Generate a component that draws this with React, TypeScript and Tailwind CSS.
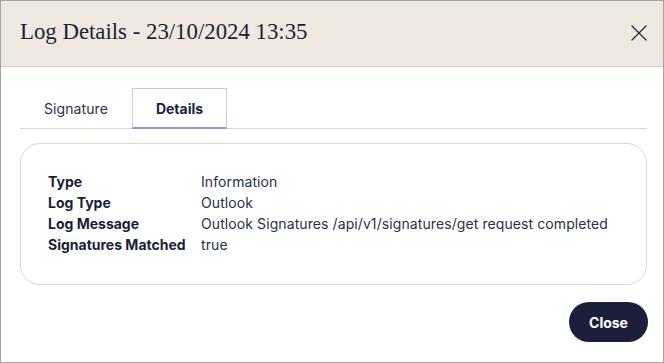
import { X } from 'lucide-react';

type Row = { label: string; value: string };

const rows: Row[] = [
	{ label: 'Type', value: 'Information' },
	{ label: 'Log Type', value: 'Outlook' },
	{ label: 'Log Message', value: 'Outlook Signatures /api/v1/signatures/get request completed' },
	{ label: 'Signatures Matched', value: 'true' },
];

const sans = "font-['Inter',sans-serif]";

function Tabs() {
	return (
		<div className="flex border-b border-[#ddd5ce] ml-[19px] mr-[16px] mt-[21px]">
			<div className={ `h-[40px] px-[24px] flex items-center text-[14px] tracking-[0.08px] text-[#2c3048] ${ sans }` }>
				Signature
			</div>
			<div
				className={ `h-[41px] -mb-px px-[23px] flex items-center text-[14px] font-bold text-[#1b1e38] bg-white border border-[#c6cae8] border-b-2 border-b-[#8c96d9] ${ sans }` }
			>
				Details
			</div>
		</div>
	);
}

function DetailsCard() {
	return (
		<div className="ml-[19px] mr-[16px] mt-[14px] rounded-[20px] border border-[#ddd6cf] px-[27px] pt-[27px] pb-[29px]">
			<div className={ `grid grid-cols-[153px_1fr] text-[14px] leading-[21px] ${ sans }` }>
				{ rows.map( ( row ) => (
					<div key={ row.label } className="contents">
						<div className="font-bold text-[#1b1e38]">{ row.label }</div>
						<div className="text-[#2c3048] tracking-[0.09px]">{ row.value }</div>
					</div>
				) ) }
			</div>
		</div>
	);
}

export default function App() {
	return (
		<div className="w-[664px] h-[363px] bg-white border border-[#a4a4a4] flex flex-col overflow-hidden">
			<div className="h-[66px] shrink-0 bg-[#eee8e1] border-b border-[#d8cfc5] flex items-center justify-between pl-[19px] pr-[10px]">
				<h1 className="font-['Liberation_Serif',serif] text-[22.8px] text-[#1c1f33] pb-[2px]">
					Log Details - 23/10/2024 13:35
				</h1>
				<button className="text-[#2a2d3f] pb-[2px]">
					<X size={ 28 } strokeWidth={ 1.15 } />
				</button>
			</div>
			<Tabs />
			<DetailsCard />
			<div className="flex justify-end mx-[15px] mt-[17px]">
				<button
					className={ `h-[40px] w-[79px] rounded-full bg-[#1b1f3b] text-white text-[14px] font-bold ${ sans }` }
				>
					Close
				</button>
			</div>
		</div>
	);
}
